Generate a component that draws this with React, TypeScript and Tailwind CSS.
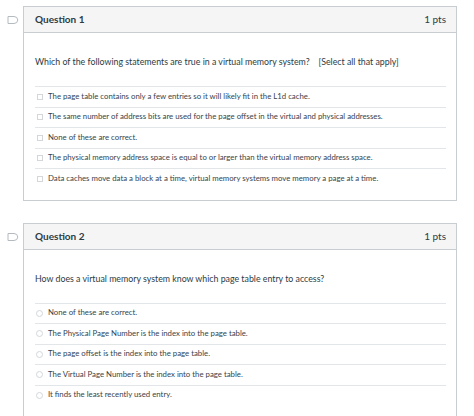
import React from "react";

type Question = {
  title: string;
  text: React.ReactNode;
  kind: "check" | "radio";
  answers: string[];
};

const questions: Question[] = [
  {
    title: "Question 1",
    text: (
      <>
        Which of the following statements are true in a virtual memory system?
        <span className="ml-[9px]">[Select all that apply]</span>
      </>
    ),
    kind: "check",
    answers: [
      "The page table contains only a few entries so it will likely fit in the L1d cache.",
      "The same number of address bits are used for the page offset in the virtual and physical addresses.",
      "None of these are correct.",
      "The physical memory address space is equal to or larger than the virtual memory address space.",
      "Data caches move data a block at a time, virtual memory systems move memory a page at a time.",
    ],
  },
  {
    title: "Question 2",
    text: "How does a virtual memory system know which page table entry to access?",
    kind: "radio",
    answers: [
      "None of these are correct.",
      "The Physical Page Number is the index into the page table.",
      "The page offset is the index into the page table.",
      "The Virtual Page Number is the index into the page table.",
      "It finds the least recently used entry.",
    ],
  },
];

function Flag() {
  return (
    <svg width="12" height="10" viewBox="0 0 12 10" className="block">
      <path
        d="M1 1.5 H7 Q10.5 1.5 10.8 5 Q10.5 8.5 7 8.5 H1 Z"
        fill="none"
        stroke="#b3bac0"
        strokeWidth="1"
      />
    </svg>
  );
}

function QuestionCard({ q }: { q: Question }) {
  return (
    <div className="flex">
      <div className="w-[23px] shrink-0 pl-[7px] pt-[9px]">
        <Flag />
      </div>
      <div className="w-[434px] border border-[#c7cdd1] bg-white">
        <div className="flex h-[26px] items-center justify-between border-b border-[#c7cdd1] bg-[#f5f5f5] pl-[11px] pr-[10px] text-[#2d3b45]">
          <span className="text-[10px] font-bold">{q.title}</span>
          <span className="text-[10px]">1 pts</span>
        </div>
        <div className="pl-[11px] pr-[10px] pb-[11px] pt-[23px]">
          <p className="text-[8.8px] leading-[12px] text-[#2d3b45]">{q.text}</p>
          <div className="mt-[18px]">
            {q.answers.map((a) => (
              <div
                key={a}
                className="flex h-[20.5px] items-center border-t border-[#e3e6e8] text-[7.8px] text-[#36434c]"
              >
                {q.kind === "check" ? (
                  <span className="ml-[2px] mr-[5px] h-[6px] w-[6px] border border-[#d3d7da] bg-white" />
                ) : (
                  <span className="ml-[1px] mr-[5px] h-[7px] w-[7px] rounded-full border border-[#d3d7da] bg-white" />
                )}
                <span>{a}</span>
              </div>
            ))}
          </div>
        </div>
      </div>
    </div>
  );
}

export default function App() {
  return (
    <div
      className="flex min-h-screen flex-col gap-[22px] bg-white pt-[6px]"
      style={{ fontFamily: "Lato, 'Liberation Sans', sans-serif" }}
    >
      {questions.map((q) => (
        <QuestionCard key={q.title} q={q} />
      ))}
    </div>
  );
}
